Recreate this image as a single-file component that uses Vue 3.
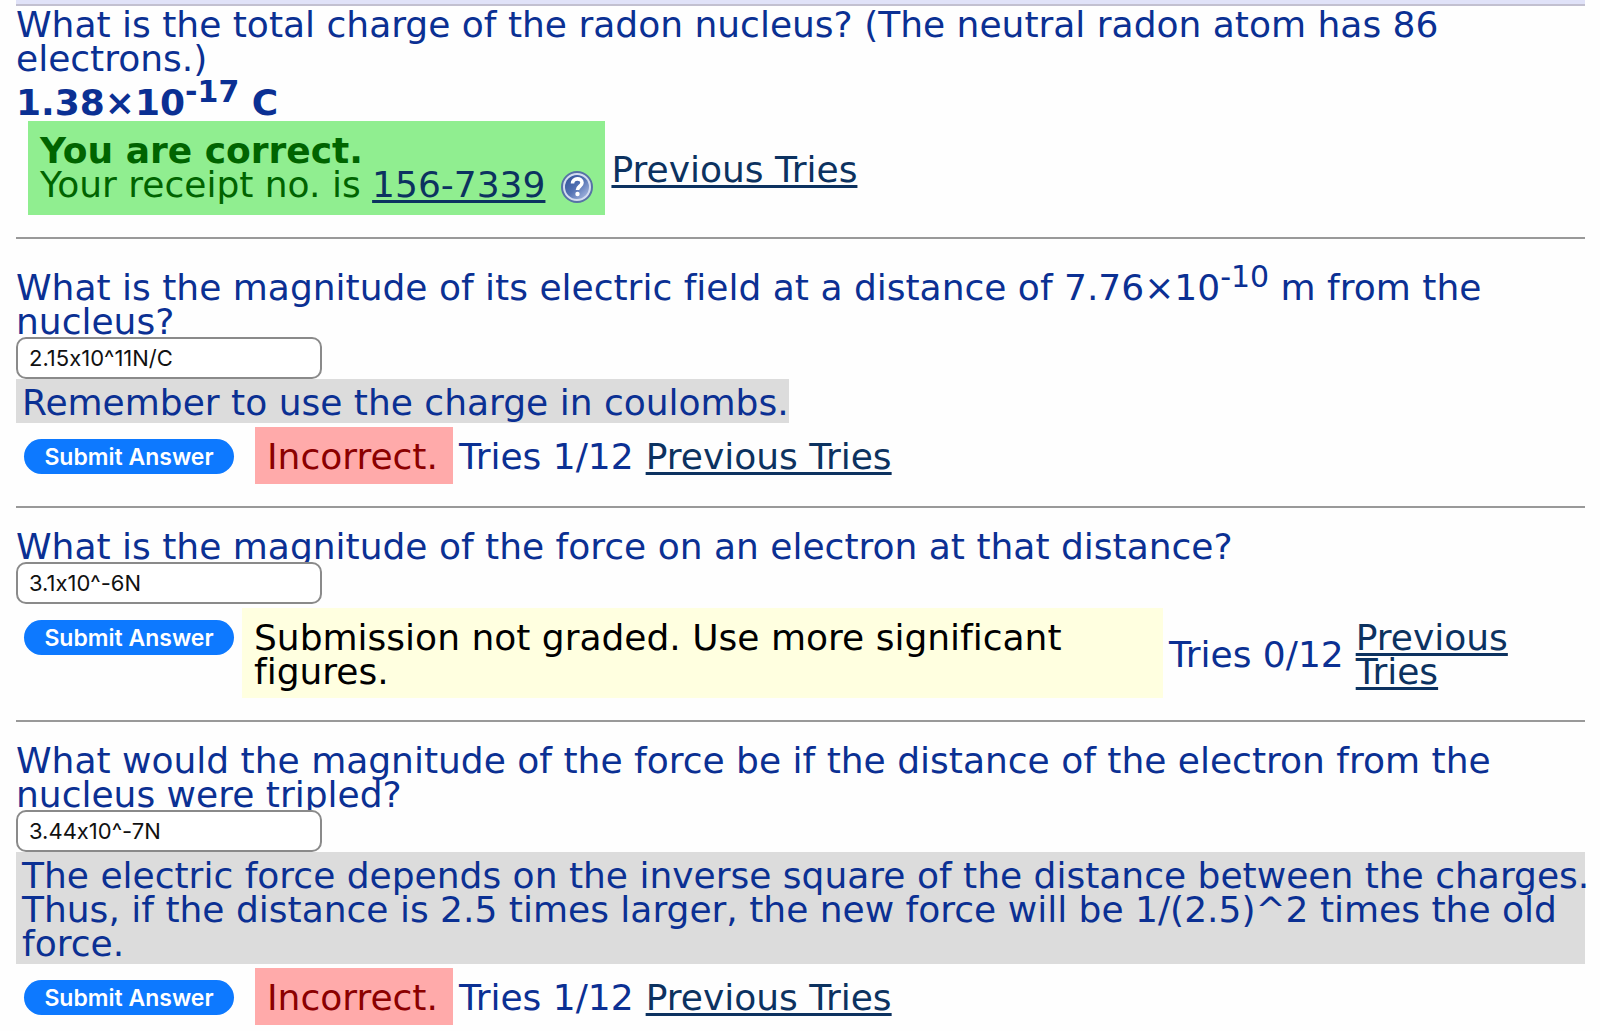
<script setup>
import { ref } from 'vue'

const field = ref('2.15x10^11N/C')
const force = ref('3.1x10^-6N')
const tripled = ref('3.44x10^-7N')
</script>

<template>
  <div class="topbar"></div>
  <main class="page">
    <section class="part first">
      <p class="question">What is the total charge of the radon nucleus? (The neutral radon atom has 86 electrons.)</p>
      <p class="answer">1.38×10<sup>-17</sup> C</p>
      <div class="row graded">
        <div class="status correct">
          <strong>You are correct.</strong><br />
          Your receipt no. is <a href="#receipt">156-7339</a>
          <a class="help" href="#help" aria-label="Help">
            <svg viewBox="0 0 32 32" aria-hidden="true">
              <defs>
                <linearGradient id="disc" x1="0" y1="0" x2="1" y2="1">
                  <stop offset="0" stop-color="#2c4f96" />
                  <stop offset="0.5" stop-color="#5573b4" />
                  <stop offset="1" stop-color="#b4c4e8" />
                </linearGradient>
              </defs>
              <circle cx="16" cy="16" r="15" fill="#d3dcf0" stroke="#5672a6" stroke-width="2" />
              <circle cx="16" cy="16" r="12" fill="url(#disc)" />
              <path d="M11.500 12.500c0-6 9.500-6 9.500-.8 0 3.500-4.500 3.600-4.500 7.300" fill="none" stroke="#fff" stroke-width="3.600" />
              <circle cx="16.500" cy="23" r="2.200" fill="#fff" />
            </svg>
          </a>
        </div>
        <a class="tries" href="#tries-1">Previous Tries</a>
      </div>
    </section>

    <hr />

    <form class="part raised" @submit.prevent>
      <label class="question" for="field">What is the magnitude of its electric field at a distance of 7.76×10<sup>-10</sup> m from the nucleus?</label>
      <input id="field" v-model="field" type="text" />
      <p class="hint">Remember to use the charge in coulombs.</p>
      <div class="row">
        <button type="submit">Submit Answer</button>
        <div class="status incorrect">Incorrect.</div>
        <span class="tries">Tries 1/12</span>
        <a class="tries" href="#tries-2">Previous Tries</a>
      </div>
    </form>

    <hr />

    <form class="part" @submit.prevent>
      <label class="question" for="force">What is the magnitude of the force on an electron at that distance?</label>
      <input id="force" v-model="force" type="text" />
      <div class="row">
        <button type="submit">Submit Answer</button>
        <div class="status ungraded">Submission not graded. Use more significant figures.</div>
        <span class="tries">Tries 0/12</span>
        <a class="tries narrow" href="#tries-3">Previous Tries</a>
      </div>
    </form>

    <hr />

    <form class="part" @submit.prevent>
      <label class="question" for="tripled">What would the magnitude of the force be if the distance of the electron from the nucleus were tripled?</label>
      <input id="tripled" v-model="tripled" type="text" />
      <p class="hint"><span class="full">The electric force depends on the inverse square of the distance between the charges. Thus, if the distance is 2.5 times larger, the new force will be 1/(2.5)^2 times the old force.</span></p>
      <div class="row">
        <button type="submit">Submit Answer</button>
        <div class="status incorrect">Incorrect.</div>
        <span class="tries">Tries 1/12</span>
        <a class="tries" href="#tries-4">Previous Tries</a>
      </div>
    </form>
  </main>
</template>

<style>
body {
  margin: 0;
  background: #fefefe;
}
</style>

<style scoped>
.topbar {
  height: 4px;
  margin: 0 15px 0 16px;
  background: #e0e2f8;
  border-bottom: 2px solid #c2c0d0;
}
.page {
  padding: 0 15px 6px 16px;
  color: #0b3093;
  font: 36px/34px Verdana, "DejaVu Sans", sans-serif;
  font-variant-ligatures: none;
}
.part {
  padding-top: 22px;
}
.part.first {
  padding-top: 2px;
}
.part.raised {
  padding-top: 32px;
}
.question,
.answer,
.hint {
  display: block;
  margin: 0;
}
.answer {
  padding: 10px 0 1px;
  font-weight: bold;
}
sup {
  font-size: 30px;
  line-height: 0;
}
hr {
  height: 0;
  margin: 22px 0 0;
  border: 0;
  border-top: 2px solid #999;
}
a {
  color: #0c3260;
  text-decoration-thickness: 3px;
  text-underline-offset: 3px;
  text-decoration-skip-ink: none;
}
input {
  position: relative;
  display: block;
  box-sizing: border-box;
  width: 306px;
  height: 42px;
  margin: -2px 0 0;
  padding: 0 11px;
  border: 2px solid #8a8a8a;
  border-radius: 10px;
  background: #fff;
  color: #111;
  font: 22px Inter, sans-serif;
  font-variant-ligatures: none;
}
.hint {
  width: fit-content;
  padding: 7px 0 3px 6px;
  background: #dcdcdc;
}
.full {
  display: block;
  margin-right: -8px;
}
.row {
  display: flex;
  align-items: center;
  padding-top: 4px;
}
.row.graded {
  padding: 0 0 0 12px;
}
button {
  align-self: flex-start;
  flex: none;
  width: 210px;
  height: 35px;
  margin: 12px 0 0 8px;
  padding: 0;
  border: 0;
  border-radius: 18px;
  background: #0d79ff;
  color: #fff;
  font: 600 23px Inter, sans-serif;
}
.status {
  padding: 13px 15px 10px 12px;
}
.correct {
  padding: 13px 12px 12px;
  background: #90ee90;
  color: #006400;
}
.incorrect {
  margin-left: 21px;
  background: #ffaaaa;
  color: #8b0000;
}
.ungraded {
  flex: 0 1 894px;
  margin-left: 8px;
  padding-bottom: 9px;
  background: #ffffe0;
  color: #000;
}
.tries {
  flex: none;
  margin-left: 6px;
  padding-top: 3px;
}
.tries + .tries {
  margin-left: 12px;
}
.tries.narrow {
  flex: 0 1 160px;
}
.help {
  display: inline-block;
  width: 32px;
  height: 32px;
  margin-left: 16px;
  vertical-align: -6px;
}
.help svg {
  display: block;
}
</style>
